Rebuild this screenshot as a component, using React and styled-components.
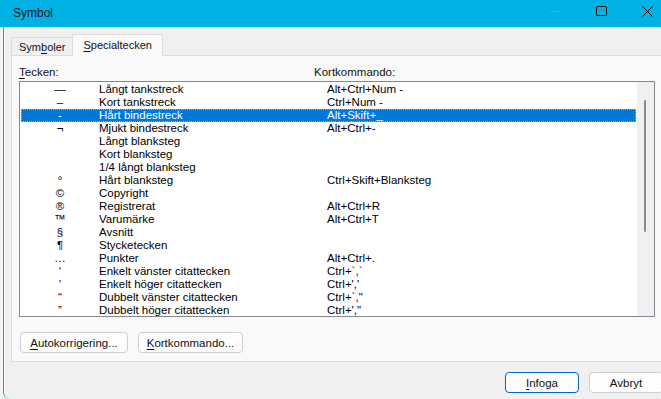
import styled, { createGlobalStyle } from "styled-components";

const GlobalStyle = createGlobalStyle`
  html, body {
    margin: 0;
    padding: 0;
    overflow: hidden;
    background: #f3f3f3;
  }
  body {
    font-family: "Liberation Sans", Arial, sans-serif;
  }
`;

const rows = [
  { sym: "—", name: "Långt tankstreck", key: "Alt+Ctrl+Num -" },
  { sym: "–", name: "Kort tankstreck", key: "Ctrl+Num -" },
  { sym: "-", name: "Hårt bindestreck", key: "Alt+Skift+_", selected: true },
  { sym: "¬", name: "Mjukt bindestreck", key: "Alt+Ctrl+-" },
  { sym: "", name: "Långt blanksteg", key: "" },
  { sym: "", name: "Kort blanksteg", key: "" },
  { sym: "", name: "1/4 långt blanksteg", key: "" },
  { sym: "°", name: "Hårt blanksteg", key: "Ctrl+Skift+Blanksteg" },
  { sym: "©", name: "Copyright", key: "" },
  { sym: "®", name: "Registrerat", key: "Alt+Ctrl+R" },
  { sym: "™", name: "Varumärke", key: "Alt+Ctrl+T" },
  { sym: "§", name: "Avsnitt", key: "" },
  { sym: "¶", name: "Stycketecken", key: "" },
  { sym: "…", name: "Punkter", key: "Alt+Ctrl+." },
  { sym: "‘", name: "Enkelt vänster citattecken", key: "Ctrl+`,`" },
  { sym: "’", name: "Enkelt höger citattecken", key: "Ctrl+','" },
  { sym: "“", name: "Dubbelt vänster citattecken", key: "Ctrl+`,\"" },
  { sym: "”", name: "Dubbelt höger citattecken", key: "Ctrl+',\"" },
];

const App = () => {
  return (
    <>
      <GlobalStyle />
      <Window>
        <TitleBar>
          <Title>Symbol</Title>
          <Controls>
            <CaptionButton>
              <svg width="10" height="10" viewBox="0 0 10 10">
                <line x1="0" y1="5.5" x2="10" y2="5.5" stroke="#4aa9cf" strokeWidth="1" />
              </svg>
            </CaptionButton>
            <CaptionButton>
              <svg width="11" height="10" viewBox="0 0 11 10">
                <rect x="0.5" y="0.5" width="10" height="9" fill="none" stroke="#111" strokeWidth="1" rx="1" />
              </svg>
            </CaptionButton>
            <CaptionButton>
              <svg width="11" height="11" viewBox="0 0 11 11">
                <path d="M0.5 0.5 L10.5 10.5 M10.5 0.5 L0.5 10.5" stroke="#111" strokeWidth="1" />
              </svg>
            </CaptionButton>
          </Controls>
        </TitleBar>

        <Frame>
          <Tabs>
            <Tab>Sym<Mn>b</Mn>oler</Tab>
            <Tab $active><Mn>S</Mn>pecialtecken</Tab>
          </Tabs>

          <Panel>
            <Header>
              <HeaderCell $w={295}><Mn>T</Mn>ecken:</HeaderCell>
              <HeaderCell>Kortkommando:</HeaderCell>
            </Header>

            <ListBox>
              <Rows>
                {rows.map((r) => (
                  <Row key={r.name} $selected={r.selected}>
                    <SymCell>{r.sym}</SymCell>
                    <NameCell>{r.name}</NameCell>
                    <KeyCell>{r.key}</KeyCell>
                  </Row>
                ))}
              </Rows>
              <Track>
                <Thumb />
              </Track>
            </ListBox>

            <PanelButtons>
              <Button $w={108}><Mn>A</Mn>utokorrigering...</Button>
              <Button $w={105}><Mn>K</Mn>ortkommando...</Button>
            </PanelButtons>
          </Panel>

          <Footer>
            <Button $w={74} $primary><Mn>I</Mn>nfoga</Button>
            <Button $w={74}>Avbryt</Button>
          </Footer>
        </Frame>
      </Window>
    </>
  );
};

const Window = styled.div`
  width: 670px;
  height: 399px;
  display: flex;
  flex-direction: column;
  font-size: 11.5px;
  color: #000;
`;

const TitleBar = styled.div`
  height: 27px;
  flex-shrink: 0;
  background: #00b2e4;
  display: flex;
  align-items: center;
  padding-left: 13px;
`;

const Title = styled.div`
  flex: 1;
  font-size: 12px;
  color: #1a1a1a;
  padding-bottom: 2px;
`;

const Controls = styled.div`
  display: flex;
  height: 100%;
`;

const CaptionButton = styled.div`
  width: 46px;
  height: 100%;
  display: flex;
  align-items: center;
  justify-content: center;
  padding-bottom: 5px;
  box-sizing: border-box;
`;

const Frame = styled.div`
  flex: 1;
  margin-left: 3px;
  border-left: 1px solid #1ea2d6;
  border-bottom-left-radius: 7px;
  background: #f0f0f0;
  padding: 7px 7px 0 7px;
  display: flex;
  flex-direction: column;
`;

const Tabs = styled.div`
  display: flex;
  align-items: flex-end;
  height: 21px;
  position: relative;
  z-index: 1;
`;

const Tab = styled.div`
  box-sizing: border-box;
  padding: 0 ${(p) => (p.$active ? "10px" : "7px")};
  display: flex;
  align-items: center;
  font-size: 11px;
  background: ${(p) => (p.$active ? "#f9f9f9" : "#f0f0f0")};
  border: 1px solid #dcdcdc;
  border-bottom: ${(p) => (p.$active ? "1px solid #f9f9f9" : "none")};
  margin-left: ${(p) => (p.$active ? "-1px" : "0")};
  margin-bottom: ${(p) => (p.$active ? "-1px" : "0")};
  height: ${(p) => (p.$active ? "22px" : "18px")};
  color: #111;
`;

const Mn = styled.span`
  text-decoration: underline;
  text-underline-offset: 2px;
`;

const Panel = styled.div`
  height: 307px;
  box-sizing: border-box;
  background: #f9f9f9;
  border: 1px solid #dcdcdc;
  padding: 0 7px 7px 7px;
  display: flex;
  flex-direction: column;
`;

const Header = styled.div`
  height: 25px;
  display: flex;
  align-items: flex-end;
  padding-bottom: 3px;
  box-sizing: border-box;
`;

const HeaderCell = styled.div`
  width: ${(p) => (p.$w ? `${p.$w}px` : "auto")};
  color: #111;
`;

const ListBox = styled.div`
  height: 236px;
  box-sizing: border-box;
  border: 1px solid #828790;
  background: #fff;
  display: flex;
  overflow: hidden;
`;

const Rows = styled.div`
  flex: 1;
  padding: 1px 1px 0 1px;
  overflow: hidden;
`;

const Row = styled.div`
  height: 13px;
  line-height: 13px;
  display: flex;
  white-space: nowrap;
  background: ${(p) => (p.$selected ? "#0078d7" : "transparent")};
  color: ${(p) => (p.$selected ? "#fff" : "#000")};
  outline: ${(p) => (p.$selected ? "1px dotted #e8a040" : "none")};
  outline-offset: -1px;
`;

const SymCell = styled.div`
  width: 78px;
  text-align: center;
`;

const NameCell = styled.div`
  width: 228px;
`;

const KeyCell = styled.div`
  flex: 1;
`;

const Track = styled.div`
  width: 17px;
  background: #f0f0f0;
  padding-left: 7px;
  box-sizing: border-box;
`;

const Thumb = styled.div`
  width: 2px;
  height: 132px;
  margin-top: 18px;
  background: #8a8a8a;
  border-radius: 1px;
`;

const PanelButtons = styled.div`
  display: flex;
  gap: 10px;
  margin-top: 15px;
  padding-left: 1px;
`;

const Button = styled.div`
  width: ${(p) => p.$w}px;
  height: 21px;
  box-sizing: border-box;
  display: flex;
  align-items: center;
  justify-content: center;
  background: #fdfdfd;
  border: 1px solid ${(p) => (p.$primary ? "#0067c0" : "#d0d0d0")};
  border-radius: 4px;
  color: #111;
  flex-shrink: 0;
`;

const Footer = styled.div`
  display: flex;
  justify-content: flex-end;
  gap: 10px;
  margin-top: 10px;
`;

export default App;
